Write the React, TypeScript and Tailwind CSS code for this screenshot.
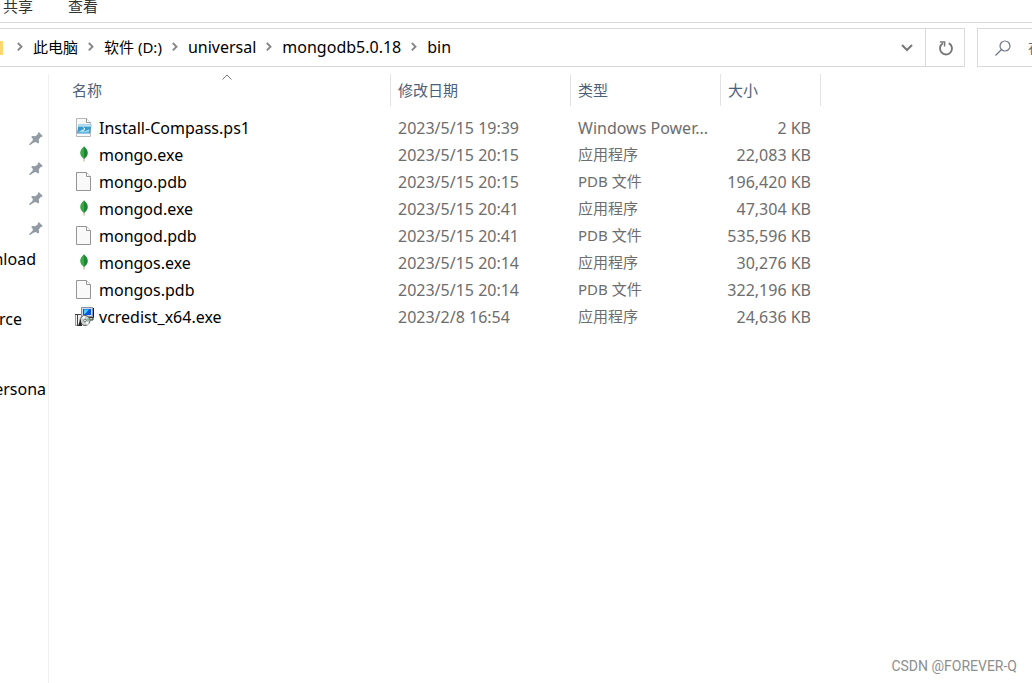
import { ReactNode } from 'react';

/* ================= Data ================= */
type FileKind = 'script' | 'mongo' | 'blank' | 'setup';

type FileItem = {
  name: string;
  date: string;
  type: string;
  size: string;
  kind: FileKind;
};

const files: FileItem[] = [
  { name: 'Install-Compass.ps1', date: '2023/5/15 19:39', type: 'Windows Power...', size: '2 KB', kind: 'script' },
  { name: 'mongo.exe', date: '2023/5/15 20:15', type: '应用程序', size: '22,083 KB', kind: 'mongo' },
  { name: 'mongo.pdb', date: '2023/5/15 20:15', type: 'PDB 文件', size: '196,420 KB', kind: 'blank' },
  { name: 'mongod.exe', date: '2023/5/15 20:41', type: '应用程序', size: '47,304 KB', kind: 'mongo' },
  { name: 'mongod.pdb', date: '2023/5/15 20:41', type: 'PDB 文件', size: '535,596 KB', kind: 'blank' },
  { name: 'mongos.exe', date: '2023/5/15 20:14', type: '应用程序', size: '30,276 KB', kind: 'mongo' },
  { name: 'mongos.pdb', date: '2023/5/15 20:14', type: 'PDB 文件', size: '322,196 KB', kind: 'blank' },
  { name: 'vcredist_x64.exe', date: '2023/2/8 16:54', type: '应用程序', size: '24,636 KB', kind: 'setup' },
];

const crumbs = [
  { label: '此电脑', cjk: true },
  { label: '软件 (D:)', cjk: true },
  { label: 'universal', cjk: false },
  { label: 'mongodb5.0.18', cjk: false },
  { label: 'bin', cjk: false },
];

/* ================= Icons ================= */
function Chevron() {
  return (
    <svg className="h-2.5 w-1.5 shrink-0" viewBox="0 0 6 10" fill="none" stroke="#858585" strokeWidth="1.9" aria-hidden>
      <path d="M.8 1l3.700 3.700L.8 8.400" />
    </svg>
  );
}

function Pin() {
  return (
    <svg className="h-3.5 w-3.5" viewBox="0 0 14 14" aria-hidden>
      <path
        fill="#929ba3"
        d="M9 .8l1-.5 3.3 3.3v1.2l-1.6.3-2 2.4.4 3-.9 1-2.6-1.4-2.2.6L1.2 13H.3v-1l3.2-3.3.4-1.8-1.7-2 .9-.9 3.1.2 2.5-1.7z"
      />
    </svg>
  );
}

function FileIcon({ kind }: { kind: FileKind }) {
  if (kind === 'mongo') {
    return (
      <svg className="h-5 w-5" viewBox="0 0 20 20" aria-hidden>
        <path d="M10 12v4.500" stroke="#b9a48a" strokeWidth="1" />
        <path d="M10 1.200C7.500 3.600 6.200 5.500 6.200 8c0 2.500 1.800 4.600 3.800 6z" fill="#3da648" />
        <path d="M10 1.200c2.500 2.400 3.800 4.300 3.800 6.800 0 2.500-1.800 4.600-3.800 6z" fill="#1a8a32" />
      </svg>
    );
  }
  if (kind === 'setup') {
    return (
      <svg className="h-5 w-5" viewBox="0 0 20 20" aria-hidden>
        <path d="M1.500 7.500h6v11h-6z" fill="#f2f2f2" stroke="#999" />
        <path d="M1 7.500h7M3.500 8v11" fill="none" stroke="#444" />
        <path d="M7.500.5h11v9h-11z" fill="#d3d9e6" stroke="#8590ab" />
        <path d="M19.500 1v9.500H9" fill="none" stroke="#111a2c" />
        <path d="M9 2h8v6H9z" fill="#0757d8" />
        <path d="M10 2.500h5L11 7h-1z" fill="#43cdf7" />
        <path d="M15 10.500h4v2.500h-4z" fill="#c3c8ce" stroke="#333" />
        <circle cx="11" cy="13.500" r="5" fill="#cbd1ce" stroke="#5a605d" />
        <path d="M11 13.500L8 10l3-1.200zM11 13.500l4 2.500-2 2z" fill="#fff" />
        <path d="M11 13.500l4-2.500.8 3z" fill="#84b795" />
        <circle cx="11" cy="13.500" r="1.300" fill="#fff" stroke="#444" strokeWidth=".7" />
        <path d="M4 19l2.500-7 1.500 7z" fill="#222" />
      </svg>
    );
  }
  return (
    <svg className="h-5 w-5" viewBox="0 0 20 20" aria-hidden>
      <path d="M2.500.5h10l4 4v14h-14z" fill="#f9f9f9" stroke={kind === 'script' ? '#b5b9bc' : '#959595'} />
      <path d="M12.500.5v4h4" fill="#fff" stroke="#959595" />
      {kind === 'script' && (
        <g>
          <path d="M4.500 6.500h13l-1.500 9H3z" fill="#3897cb" />
          <path d="M4.500 6.500h13l-.4 2.200H4.200z" fill="#b6dff1" />
          <path d="M3.800 14.500l4.200-3 3 1.500 4.500-2-.6 3.500z" fill="#8fd5f0" />
          <path d="M9 9.500l2 1.500-3 2" fill="none" stroke="#e9f8ff" />
        </g>
      )}
    </svg>
  );
}

/* ================= Parts ================= */
function HeaderCell({ children }: { children: ReactNode }) {
  return (
    <th scope="col" className="h-8 border-r border-[#e2e2e2] pl-[7px] text-left text-[15px] font-normal text-[#4c607a]">
      {children}
    </th>
  );
}

function Sidebar() {
  return (
    <nav className="mt-[7px] w-[49px] shrink-0 overflow-hidden border-r border-[#f0f0f0] pt-[50px]">
      <ul className="text-base">
        {[0, 1, 2, 3].map((n) => (
          <li key={n} className="flex h-[30px] items-center justify-end pr-[5px]">
            <Pin />
          </li>
        ))}
        <li className="flex h-[30px] items-center justify-end pr-3">
          <a href="#download">nload</a>
        </li>
        <li className="mt-[30px] flex h-[30px] items-center justify-end pr-[26px]">
          <a href="#source">rce</a>
        </li>
        <li className="mt-10 flex h-[30px] items-center justify-end pr-0.5">
          <a href="#personal">ersona</a>
        </li>
      </ul>
    </nav>
  );
}

/* ================= Page ================= */
export default function App() {
  return (
    <div className="relative flex min-h-screen flex-col overflow-hidden bg-white font-['Noto_Sans','Noto_Sans_CJK_SC',sans-serif] text-black">
      {/* Ribbon tabs */}
      <div className="flex h-[23px] items-start gap-[35px] border-b border-[#dadada] pl-[3px] text-[15px] leading-3 text-[#333]">
        <button type="button">共享</button>
        <button type="button">查看</button>
      </div>

      {/* Address bar */}
      <div className="mt-[5px] flex h-[39px] gap-3">
        <div className="flex min-w-0 flex-1 items-center border border-l-0 border-[#d9d9d9]">
          <span className="h-3.5 w-[3px] bg-[#ffd76e]" />
          <ol className="ml-3.5 flex flex-1 items-center gap-2.5 pb-px whitespace-nowrap">
            {crumbs.map((c) => (
              <li key={c.label} className="flex items-center gap-2.5">
                <Chevron />
                <a href="#path" className={c.cjk ? 'text-[15px]' : 'text-base'}>
                  {c.label}
                </a>
              </li>
            ))}
          </ol>
          <button type="button" aria-label="以前的位置" className="flex h-full w-9 items-center justify-center">
            <svg className="h-2 w-3" viewBox="0 0 12 8" fill="none" stroke="#777" strokeWidth="2" aria-hidden>
              <path d="M1 1l5 5 5-5" />
            </svg>
          </button>
          <button
            type="button"
            aria-label="刷新"
            className="flex h-full w-[39px] items-center justify-center border-l border-[#d9d9d9] pl-0.5"
          >
            <svg className="h-4 w-4" viewBox="0 0 16 16" fill="none" stroke="#777" strokeWidth="1.900" aria-hidden>
              <path d="M10.800 3.200a6 6 0 1 1-5.800.1" />
              <path d="M2 2h4.600v4.500" strokeWidth="1.500" />
            </svg>
          </button>
        </div>
        <label className="flex w-[55px] items-center gap-[17px] overflow-hidden border border-r-0 border-[#d9d9d9] pl-[17px]">
          <svg className="h-4 w-4 shrink-0" viewBox="0 0 16 16" fill="none" stroke="#6f7680" strokeWidth="1.200" aria-hidden>
            <circle cx="10" cy="6" r="5" />
            <path d="M6.500 9.500L.5 15.500" />
          </svg>
          <input
            type="text"
            aria-label="搜索"
            placeholder="在 bin 中搜索"
            className="w-32 shrink-0 text-[15px] outline-none placeholder:text-[#6d6d6d]"
          />
        </label>
      </div>

      <div className="flex flex-1">
        <Sidebar />

        {/* File list */}
        <main className="min-w-0 flex-1 pt-[7px]">
          <table className="w-[772px] table-fixed border-separate border-spacing-0 whitespace-nowrap text-[#6d6d6d]">
            <colgroup>
              <col className="w-[342px]" />
              <col className="w-[180px]" />
              <col className="w-[150px]" />
              <col className="w-[100px]" />
            </colgroup>
            <thead>
              <tr>
                <th
                  scope="col"
                  aria-sort="ascending"
                  className="relative h-8 border-r border-[#e2e2e2] pl-[23px] text-left text-[15px] font-normal text-[#4c607a]"
                >
                  名称
                  <svg
                    className="absolute top-0 left-[173px] h-1.5 w-2.5"
                    viewBox="0 0 10 6"
                    fill="none"
                    stroke="#777"
                    aria-hidden
                  >
                    <path d="M.5 5.500L5 1l4.500 4.500" />
                  </svg>
                </th>
                <HeaderCell>修改日期</HeaderCell>
                <HeaderCell>类型</HeaderCell>
                <HeaderCell>大小</HeaderCell>
              </tr>
            </thead>
            <tbody className="before:block before:h-2 before:content-['']">
              {files.map((f) => (
                <tr key={f.name} className="h-[27px] text-base">
                  <td className="p-0 pl-[25px] text-black">
                    <div className="flex items-center gap-[5px]">
                      <FileIcon kind={f.kind} />
                      <span>{f.name}</span>
                    </div>
                  </td>
                  <td className="p-0 pl-[7px]">{f.date}</td>
                  <td className={f.kind === 'script' ? 'p-0 pl-[7px]' : 'p-0 pl-[7px] text-[15px]'}>{f.type}</td>
                  <td className="p-0 pr-2.5 text-right">{f.size}</td>
                </tr>
              ))}
            </tbody>
          </table>
        </main>
      </div>

      <div className="absolute right-[15px] bottom-[7px] font-[Roboto,sans-serif] text-sm text-[#8e8e8e]">
        CSDN @FOREVER-Q
      </div>
    </div>
  );
}
